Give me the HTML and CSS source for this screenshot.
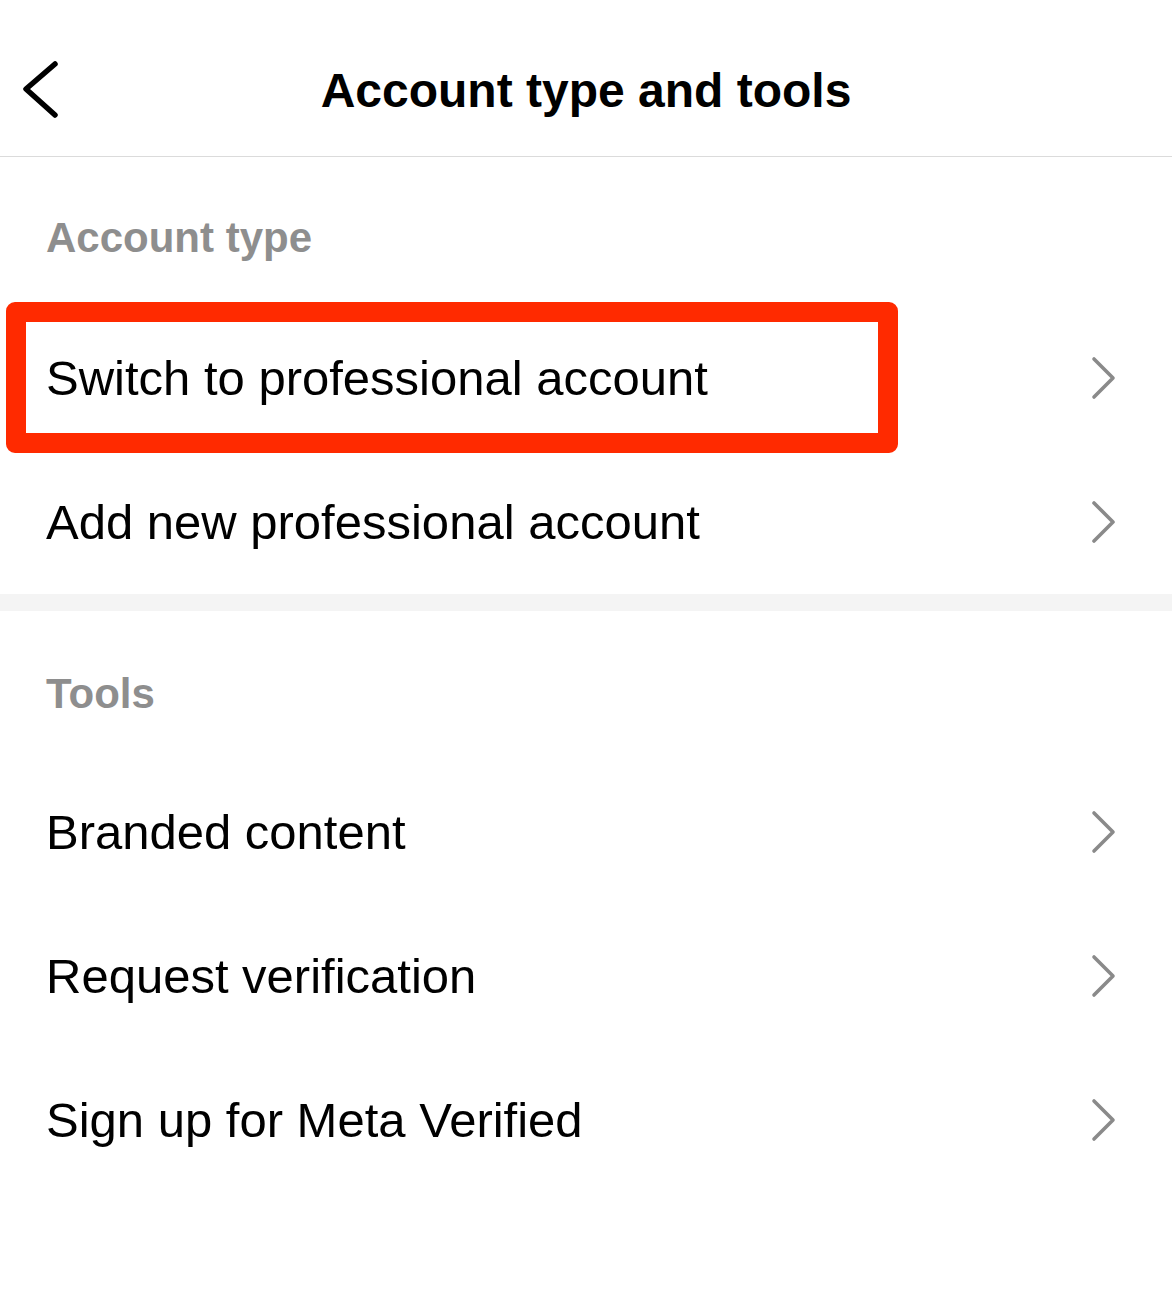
FILE: index.html
```html
<!DOCTYPE html>
<html>
<head>
<meta charset="utf-8">
<link rel="stylesheet" href="styles.css">
</head>
<body>
<div class="page">
  <header class="topbar">
    <span class="back">
      <svg width="44" height="62" viewBox="0 0 44 62"><polyline points="35,5 6,30 35,56" fill="none" stroke="#000" stroke-width="5.5" stroke-linecap="round" stroke-linejoin="round"/></svg>
    </span>
    <h1 class="title">Account type and tools</h1>
  </header>

  <section class="section">
    <div class="label label-first">Account type</div>
    <div class="row highlighted">
      <span class="row-text">Switch to professional account</span>
      <svg class="chev" width="28" height="44" viewBox="0 0 28 44"><polyline points="5,3 24,22 5,41" fill="none" stroke="#8a8a8a" stroke-width="3.6" stroke-linecap="round" stroke-linejoin="round"/></svg>
      <span class="mark"></span>
    </div>
    <div class="row">
      <span class="row-text">Add new professional account</span>
      <svg class="chev" width="28" height="44" viewBox="0 0 28 44"><polyline points="5,3 24,22 5,41" fill="none" stroke="#8a8a8a" stroke-width="3.6" stroke-linecap="round" stroke-linejoin="round"/></svg>
    </div>
  </section>

  <div class="band"></div>

  <section class="section">
    <div class="label label-second">Tools</div>
    <div class="row">
      <span class="row-text">Branded content</span>
      <svg class="chev" width="28" height="44" viewBox="0 0 28 44"><polyline points="5,3 24,22 5,41" fill="none" stroke="#8a8a8a" stroke-width="3.6" stroke-linecap="round" stroke-linejoin="round"/></svg>
    </div>
    <div class="row">
      <span class="row-text">Request verification</span>
      <svg class="chev" width="28" height="44" viewBox="0 0 28 44"><polyline points="5,3 24,22 5,41" fill="none" stroke="#8a8a8a" stroke-width="3.6" stroke-linecap="round" stroke-linejoin="round"/></svg>
    </div>
    <div class="row">
      <span class="row-text">Sign up for Meta Verified</span>
      <svg class="chev" width="28" height="44" viewBox="0 0 28 44"><polyline points="5,3 24,22 5,41" fill="none" stroke="#8a8a8a" stroke-width="3.6" stroke-linecap="round" stroke-linejoin="round"/></svg>
    </div>
  </section>
</div>
</body>
</html>
```

FILE: styles.css
```css
html, body {
  margin: 0;
  padding: 0;
  background: #ffffff;
}
body {
  font-family: "Liberation Sans", Arial, sans-serif;
  color: #000;
}
.page {
  width: 1172px;
  min-height: 1298px;
  background: #fff;
}
.topbar {
  height: 156px;
  border-bottom: 1px solid #dbdbdb;
  display: flex;
  align-items: center;
  justify-content: center;
  position: relative;
}
.back {
  position: absolute;
  left: 20px;
  top: 59px;
  display: block;
  line-height: 0;
}
.title {
  margin: 0;
  font-size: 48px;
  font-weight: 700;
  line-height: 56px;
  margin-top: 26px;
}
.section {
  display: flex;
  flex-direction: column;
}
.label {
  font-size: 42px;
  font-weight: 700;
  color: #8e8e8e;
  line-height: 48px;
  padding-left: 46px;
}
.label-first {
  padding-top: 57px;
  padding-bottom: 44px;
}
.label-second {
  padding-top: 59px;
  padding-bottom: 42px;
}
.row {
  height: 144px;
  display: flex;
  align-items: center;
  justify-content: space-between;
  padding-left: 46px;
  padding-right: 55px;
  position: relative;
}
.row-text {
  font-size: 49px;
  line-height: 56px;
}
.chev {
  display: block;
}
.mark {
  position: absolute;
  left: 6px;
  top: -4px;
  width: 852px;
  height: 111px;
  border: 20px solid #ff2a00;
  border-radius: 9px;
  pointer-events: none;
}
.band {
  height: 17px;
  background: #f4f4f4;
}
```
